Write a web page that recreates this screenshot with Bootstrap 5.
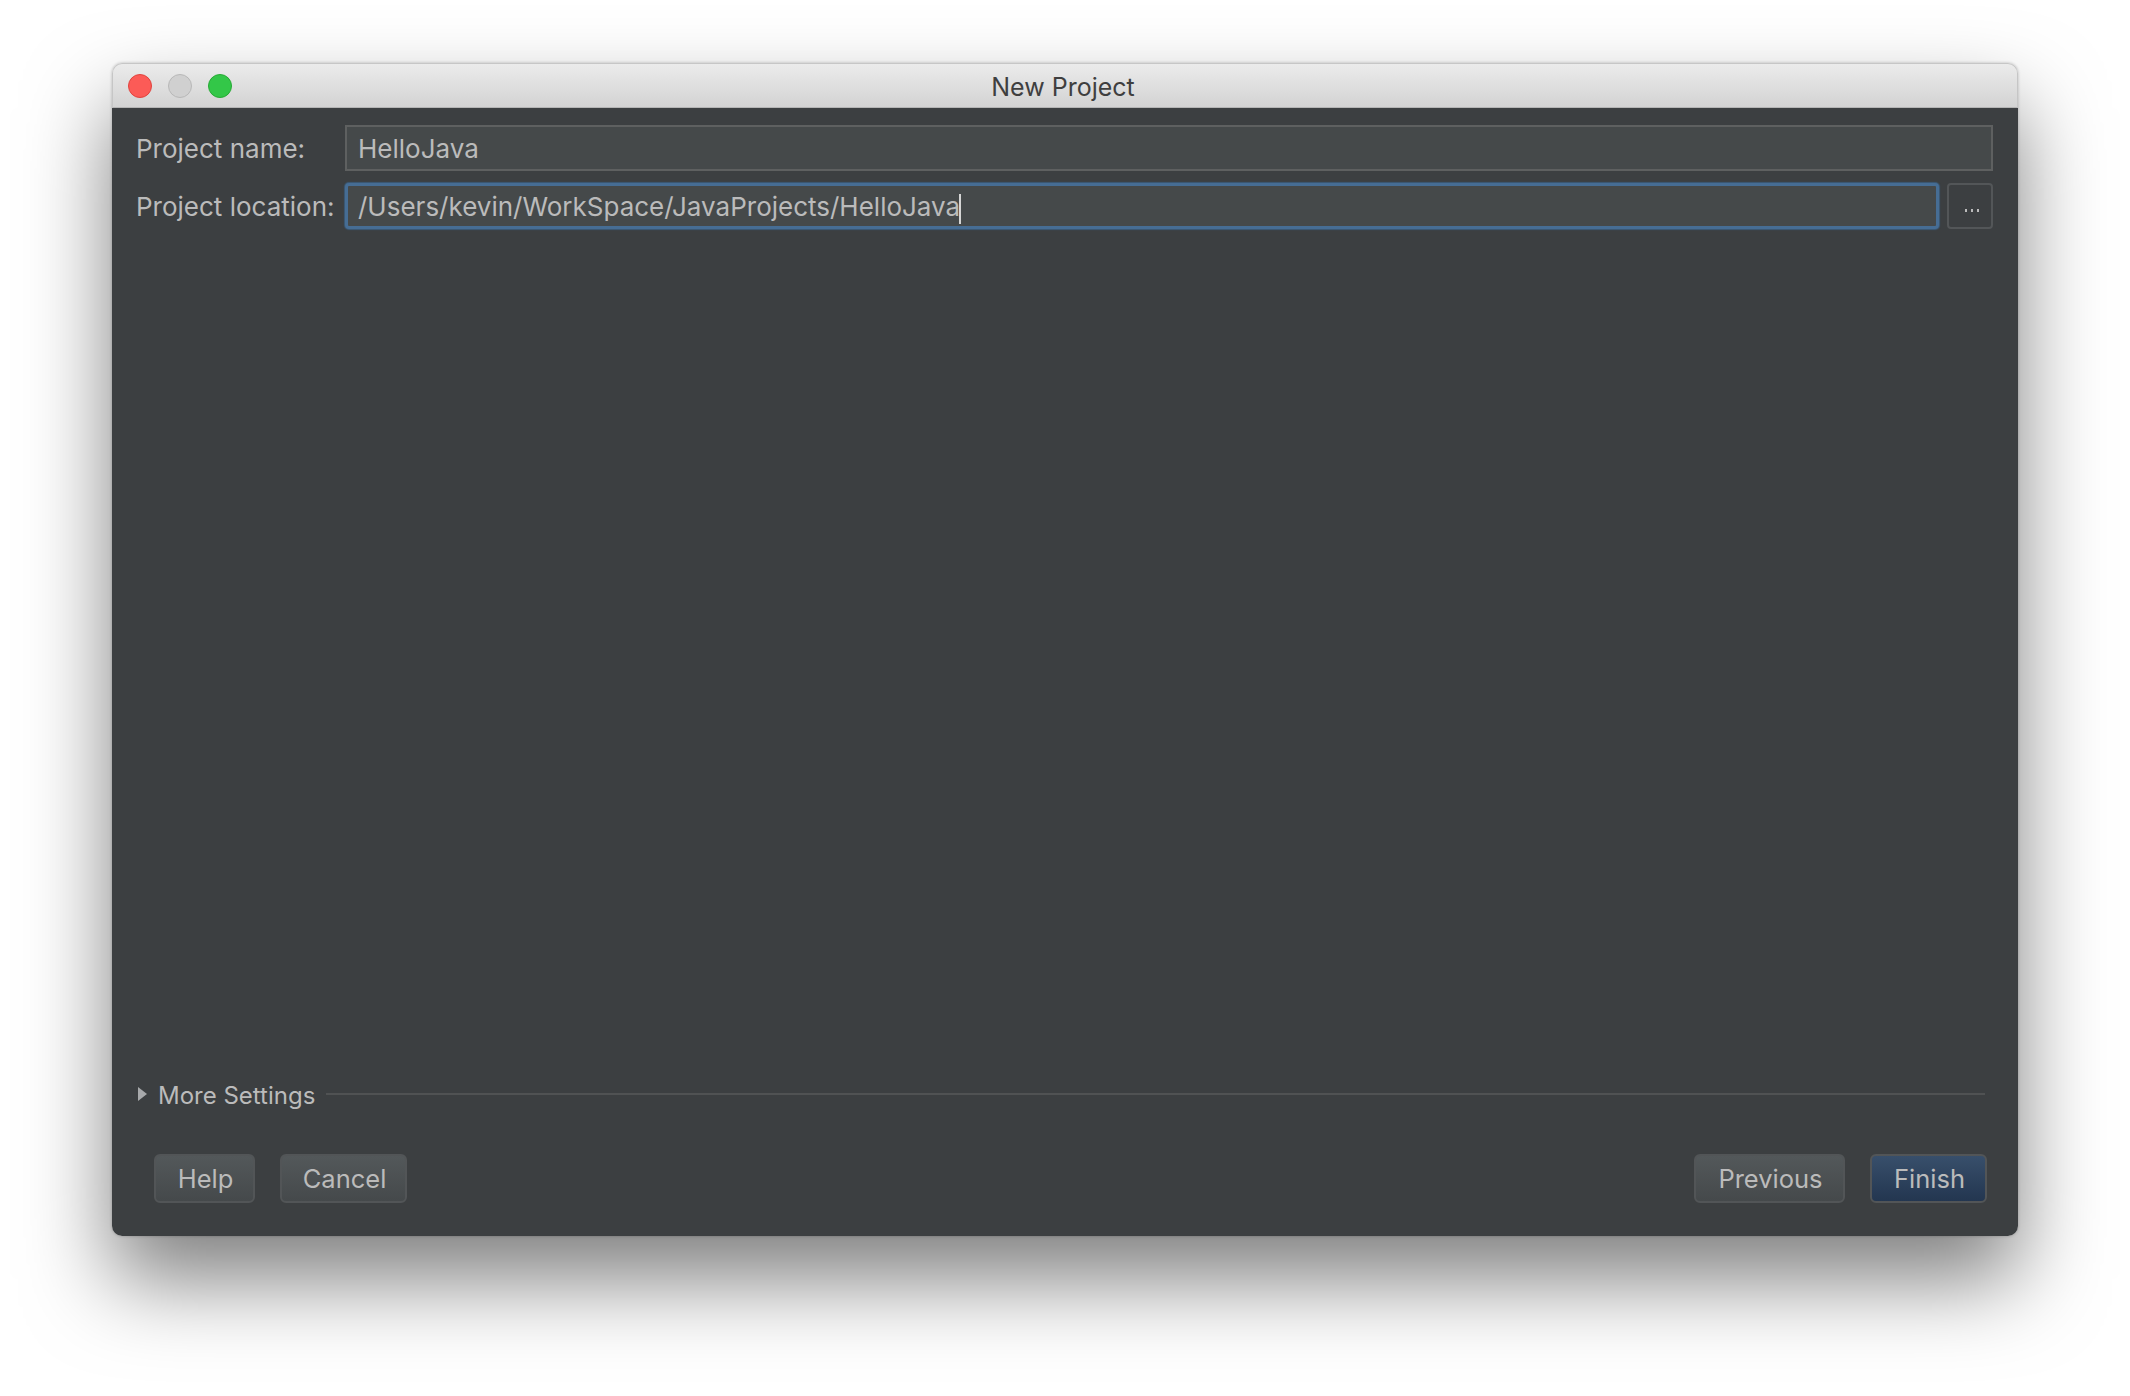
<!DOCTYPE html>
<html lang="en">
<head>
<meta charset="utf-8">
<title>New Project</title>
<link href="https://cdn.jsdelivr.net/npm/bootstrap@5.3.0/dist/css/bootstrap.min.css" rel="stylesheet">
<style>
html,body{height:100%;background:#fff;overflow:hidden}
body{padding:63px 112px 0;font-family:Inter,"DejaVu Sans",sans-serif;font-size:26px;color:#bbb}
.mac-window{width:1906px;height:1173px;border-radius:10px;box-shadow:0 44px 85px rgba(0,0,0,.5),0 0 3px rgba(0,0,0,.25)}
.mac-title{height:45px;flex:none;background:linear-gradient(#ebebeb,#d3d3d3);border:1px solid #c6c6c6;border-bottom:1px solid #b5b5b5;border-radius:10px 10px 0 0;padding-left:15px;position:relative}
.mac-dot{width:24px;height:24px;border-radius:50%;border:1px solid}
.dot-red{background:#fc5b57;border-color:#e0443e}
.dot-gray{background:#d0d0d0;border-color:#b8b8b8}
.dot-green{background:#33c748;border-color:#27aa35}
.mac-name{position:absolute;left:0;right:4px;top:0;bottom:0;color:#3f3f3f;font-size:25px;line-height:46px;text-align:center}
.mac-body{background:#3c3f41;border-radius:0 0 10px 10px;padding:17px 25px 33px 24px;min-height:0}
.form-line{height:46px}
.form-line+.form-line{margin-top:12px}
.line-label{width:209px;flex:none;white-space:nowrap}
.ide-field{background:#45494a;border:2px solid #5e6060;height:46px;padding-left:11px;line-height:44px;color:#bbb;white-space:nowrap;font-size:26px}
.ide-field.is-active{border:3px solid #466d94;border-radius:4px;box-shadow:0 0 1px 1px #3b5a78;line-height:42px;padding-left:10px;margin-right:8px}
.caret-bar{display:inline-block;width:2px;height:30px;background:#d5d5d5;vertical-align:middle;margin-left:-1px}
.dots-btn{width:46px;height:46px;flex:none;border:2px solid #535658;border-radius:4px;background:#3c3f41;position:relative}
.dots-btn span{position:absolute;left:16px;top:24px;width:2px;height:3px;background:#bbb;box-shadow:6px 0 #bbb,12px 0 #bbb}
.more-row{height:30px;margin-bottom:45px}
.more-tri{width:0;height:0;border-left:9px solid #a7a9ab;border-top:7px solid transparent;border-bottom:7px solid transparent;margin-left:2px;margin-right:11px}
.more-text{font-size:24px;padding-top:3px}
.more-rule{height:2px;background:#505253;margin-left:11px;margin-right:8px;margin-top:-1px}
.ide-btn{height:49px;padding:0 0 0 2px;border:2px solid #525557;border-radius:6px;background:linear-gradient(#53585a,#45494b);color:#bbb;font-size:25.5px;line-height:44px;font-family:inherit}
.ide-btn.is-default{background:linear-gradient(#384f6b,#233650)}
.w-help{width:101px;margin-left:18px}.w-cancel{width:127px;margin-left:25px}
.w-prev{width:151px}.w-finish{width:117px;margin-left:25px;margin-right:6px}
</style>
</head>
<body>
<div class="mac-window d-flex flex-column">
  <div class="mac-title d-flex align-items-center gap-3">
    <div class="mac-dot dot-red"></div><div class="mac-dot dot-gray"></div><div class="mac-dot dot-green"></div>
    <div class="mac-name">New Project</div>
  </div>
  <div class="mac-body flex-grow-1 d-flex flex-column">
    <div class="form-line d-flex align-items-center">
      <div class="line-label">Project name:</div>
      <div class="ide-field flex-grow-1">HelloJava</div>
    </div>
    <div class="form-line d-flex align-items-center">
      <div class="line-label">Project location:</div>
      <div class="ide-field is-active flex-grow-1">/Users/kevin/WorkSpace/JavaProjects/HelloJava<span class="caret-bar"></span></div>
      <div class="dots-btn"><span></span></div>
    </div>
    <div class="flex-grow-1"></div>
    <div class="more-row d-flex align-items-center">
      <div class="more-tri"></div>
      <div class="more-text">More Settings</div>
      <div class="more-rule flex-grow-1"></div>
    </div>
    <div class="d-flex">
      <button class="btn ide-btn w-help" type="button">Help</button>
      <button class="btn ide-btn w-cancel" type="button">Cancel</button>
      <div class="flex-grow-1"></div>
      <button class="btn ide-btn w-prev" type="button">Previous</button>
      <button class="btn ide-btn is-default w-finish" type="button">Finish</button>
    </div>
  </div>
</div>
</body>
</html>
